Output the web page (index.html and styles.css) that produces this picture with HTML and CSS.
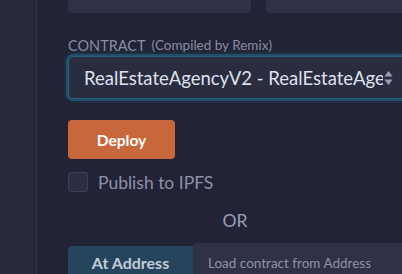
FILE: index.html
```html
<!DOCTYPE html>
<html>
<head>
<meta charset="utf-8">
<link rel="stylesheet" href="styles.css">
</head>
<body>
<div class="app">
  <div class="sidebar"></div>
  <div class="main">
    <div class="top-row">
      <div class="top-input first"></div>
      <div class="top-input second"></div>
    </div>
    <div class="label"><span class="label-main">CONTRACT</span><span class="label-sub">(Compiled by Remix)</span></div>
    <div class="select">
      <span class="select-text">RealEstateAgencyV2 - RealEstateAgencyV2</span>
      <span class="select-arrows">
        <svg width="9" height="16" viewBox="0 0 9 16"><path d="M4.5 1 L8.5 6.5 L0.5 6.5 Z" fill="#9a9db5"/><path d="M4.5 15 L8.5 9.5 L0.5 9.5 Z" fill="#9a9db5"/></svg>
      </span>
    </div>
    <button class="deploy">Deploy</button>
    <label class="check-row"><span class="checkbox"></span><span class="check-label">Publish to IPFS</span></label>
    <div class="or">OR</div>
    <div class="address-row">
      <button class="at-address">At Address</button>
      <div class="address-input">Load contract from Address</div>
    </div>
  </div>
</div>
</body>
</html>
```
FILE: styles.css
```css
html, body {
  margin: 0;
  padding: 0;
  width: 402px;
  height: 274px;
  overflow: hidden;
  background: #222336;
  font-family: Lato, "Noto Sans", sans-serif;
}
.app {
  display: flex;
  height: 274px;
}
.sidebar {
  width: 36px;
  flex: none;
  background: #272939;
  border-right: 1px solid #34364a;
}
.main {
  flex: none;
  width: 400px;
  padding-left: 31px;
  display: flex;
  flex-direction: column;
}
.main > * {
  flex-shrink: 0;
}
.top-row {
  display: flex;
  gap: 15px;
  height: 13px;
  align-items: flex-end;
}
.top-input {
  background: #2f3146;
  border-radius: 0 0 4px 4px;
  flex: none;
}
.top-input.first { width: 183px; height: 14px; }
.top-input.second { width: 160px; height: 13px; }
.label {
  margin-top: 23px;
  height: 19px;
  line-height: 19px;
  white-space: nowrap;
  display: flex;
  gap: 6px;
  color: #8a8da4;
}
.label-main {
  font-size: 14.5px;
}
.label-sub {
  font-size: 13.5px;
}
.select {
  margin-top: 1px;
  width: 340px;
  height: 43px;
  box-sizing: border-box;
  background: #2a2c3f;
  border: 1px solid #27607a;
  border-radius: 5px;
  box-shadow: 0 0 0 2px rgba(32, 135, 165, 0.35), 0 0 5px 2px rgba(30, 125, 155, 0.3);
  display: flex;
  align-items: center;
  padding-left: 15px;
  position: relative;
  overflow: hidden;
}
.select-text {
  color: #dfe1ef;
  font-size: 18.5px;
  white-space: nowrap;
  width: 299px;
  overflow: hidden;
}
.select-arrows {
  position: absolute;
  left: 315px;
  top: 13px;
  width: 9px;
  height: 16px;
  background: #2a2c3f;
  display: flex;
}
.deploy {
  margin-top: 21px;
  width: 107px;
  height: 39px;
  background: #c8673b;
  border: none;
  border-radius: 4px;
  color: #ffffff;
  font-family: Lato, sans-serif;
  font-weight: 700;
  font-size: 15.5px;
  padding: 0;
}
.check-row {
  margin-top: 13px;
  display: flex;
  align-items: center;
  height: 20px;
}
.checkbox {
  width: 18px;
  height: 18px;
  border: 1px solid #3c3f56;
  background: #2c2e42;
  border-radius: 3px;
}
.check-label {
  margin-left: 10px;
  color: #8e91a8;
  font-size: 17.5px;
}
.or {
  margin-top: 19px;
  width: 334px;
  text-align: center;
  color: #9a9db5;
  font-size: 17.5px;
  line-height: 20px;
}
.address-row {
  margin-top: 12px;
  display: flex;
  align-items: flex-start;
}
.at-address {
  margin-top: 3px;
  width: 125px;
  height: 40px;
  background: #24455b;
  border: none;
  border-radius: 4px 0 0 4px;
  color: #c5cbda;
  font-family: Lato, sans-serif;
  font-weight: 700;
  font-size: 16px;
  padding: 0 0 8px 0;
}
.address-input {
  width: 220px;
  height: 40px;
  background: #2f3146;
  border-radius: 4px 0 0 0;
  color: #8e91a8;
  font-size: 13.5px;
  padding: 12px 0 0 15px;
  box-sizing: border-box;
}
```
